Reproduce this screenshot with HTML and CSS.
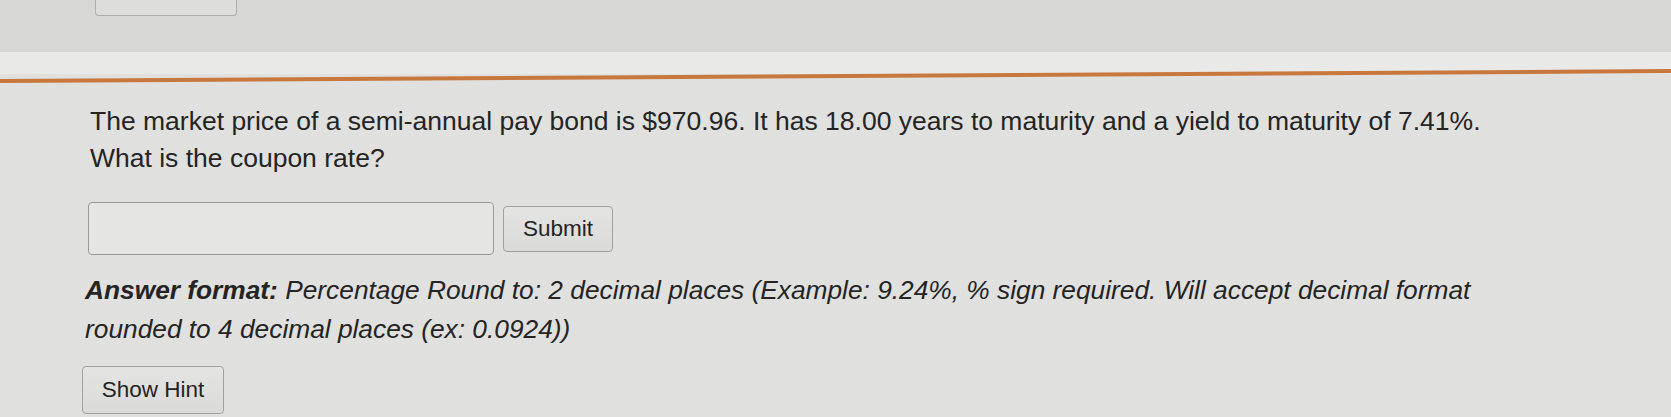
FILE: index.html
```html
<!DOCTYPE html>
<html>
<head>
<meta charset="utf-8">
<link rel="stylesheet" href="styles.css">
</head>
<body>
<div class="top">
  <div class="top-btn"></div>
</div>
<div class="band"></div>
<div class="rule"></div>
<main class="content">
  <p class="question">The market price of a semi-annual pay bond is $970.96. It has 18.00 years to maturity and a yield to maturity of 7.41%.<br>What is the coupon rate?</p>
  <div class="answer-row">
    <div class="input"></div>
    <button class="btn submit">Submit</button>
  </div>
  <p class="format"><b>Answer format:</b> Percentage Round to: 2 decimal places (Example: 9.24%, % sign required. Will accept decimal format<br>rounded to 4 decimal places (ex: 0.0924))</p>
  <button class="btn hint">Show Hint</button>
</main>
</body>
</html>
```
FILE: styles.css
```css
html, body {
  margin: 0;
  padding: 0;
}
body {
  width: 1671px;
  height: 417px;
  overflow: hidden;
  background: #e0e0de;
  font-family: "Liberation Sans", Arial, sans-serif;
  color: #242424;
}
.top {
  height: 52px;
  background: #d7d7d5;
  padding-left: 95px;
}
.top-btn {
  width: 140px;
  height: 15px;
  border: 1px solid #aeaeac;
  border-top: none;
  border-radius: 0 0 4px 4px;
  background: #dddddb;
}
.band {
  height: 22px;
  background: #e9e9e7;
}
.rule {
  height: 4px;
  background: #c8773d;
  transform: rotate(-0.34deg);
  transform-origin: center;
}
.content {
  padding: 25px 0 0 90px;
}
.question {
  margin: 0;
  font-size: 26.5px;
  line-height: 37px;
}
.answer-row {
  display: flex;
  align-items: center;
  gap: 9px;
  margin: 25px 0 0 -2px;
}
.input {
  width: 404px;
  height: 51px;
  border: 1px solid #9a9a98;
  border-radius: 4px;
  background: #e5e5e3;
}
.btn {
  font-family: "Liberation Sans", Arial, sans-serif;
  font-size: 22.5px;
  color: #242424;
  background: linear-gradient(#e4e4e2, #dadad8);
  border: 1px solid #a0a09e;
  border-radius: 4px;
  padding: 0;
}
.submit {
  width: 110px;
  height: 46px;
}
.format {
  margin: 16px 0 0 -5px;
  font-size: 26.3px;
  line-height: 39px;
  font-style: italic;
}
.hint {
  display: block;
  margin: 17px 0 0 -8px;
  width: 142px;
  height: 48px;
}
```
